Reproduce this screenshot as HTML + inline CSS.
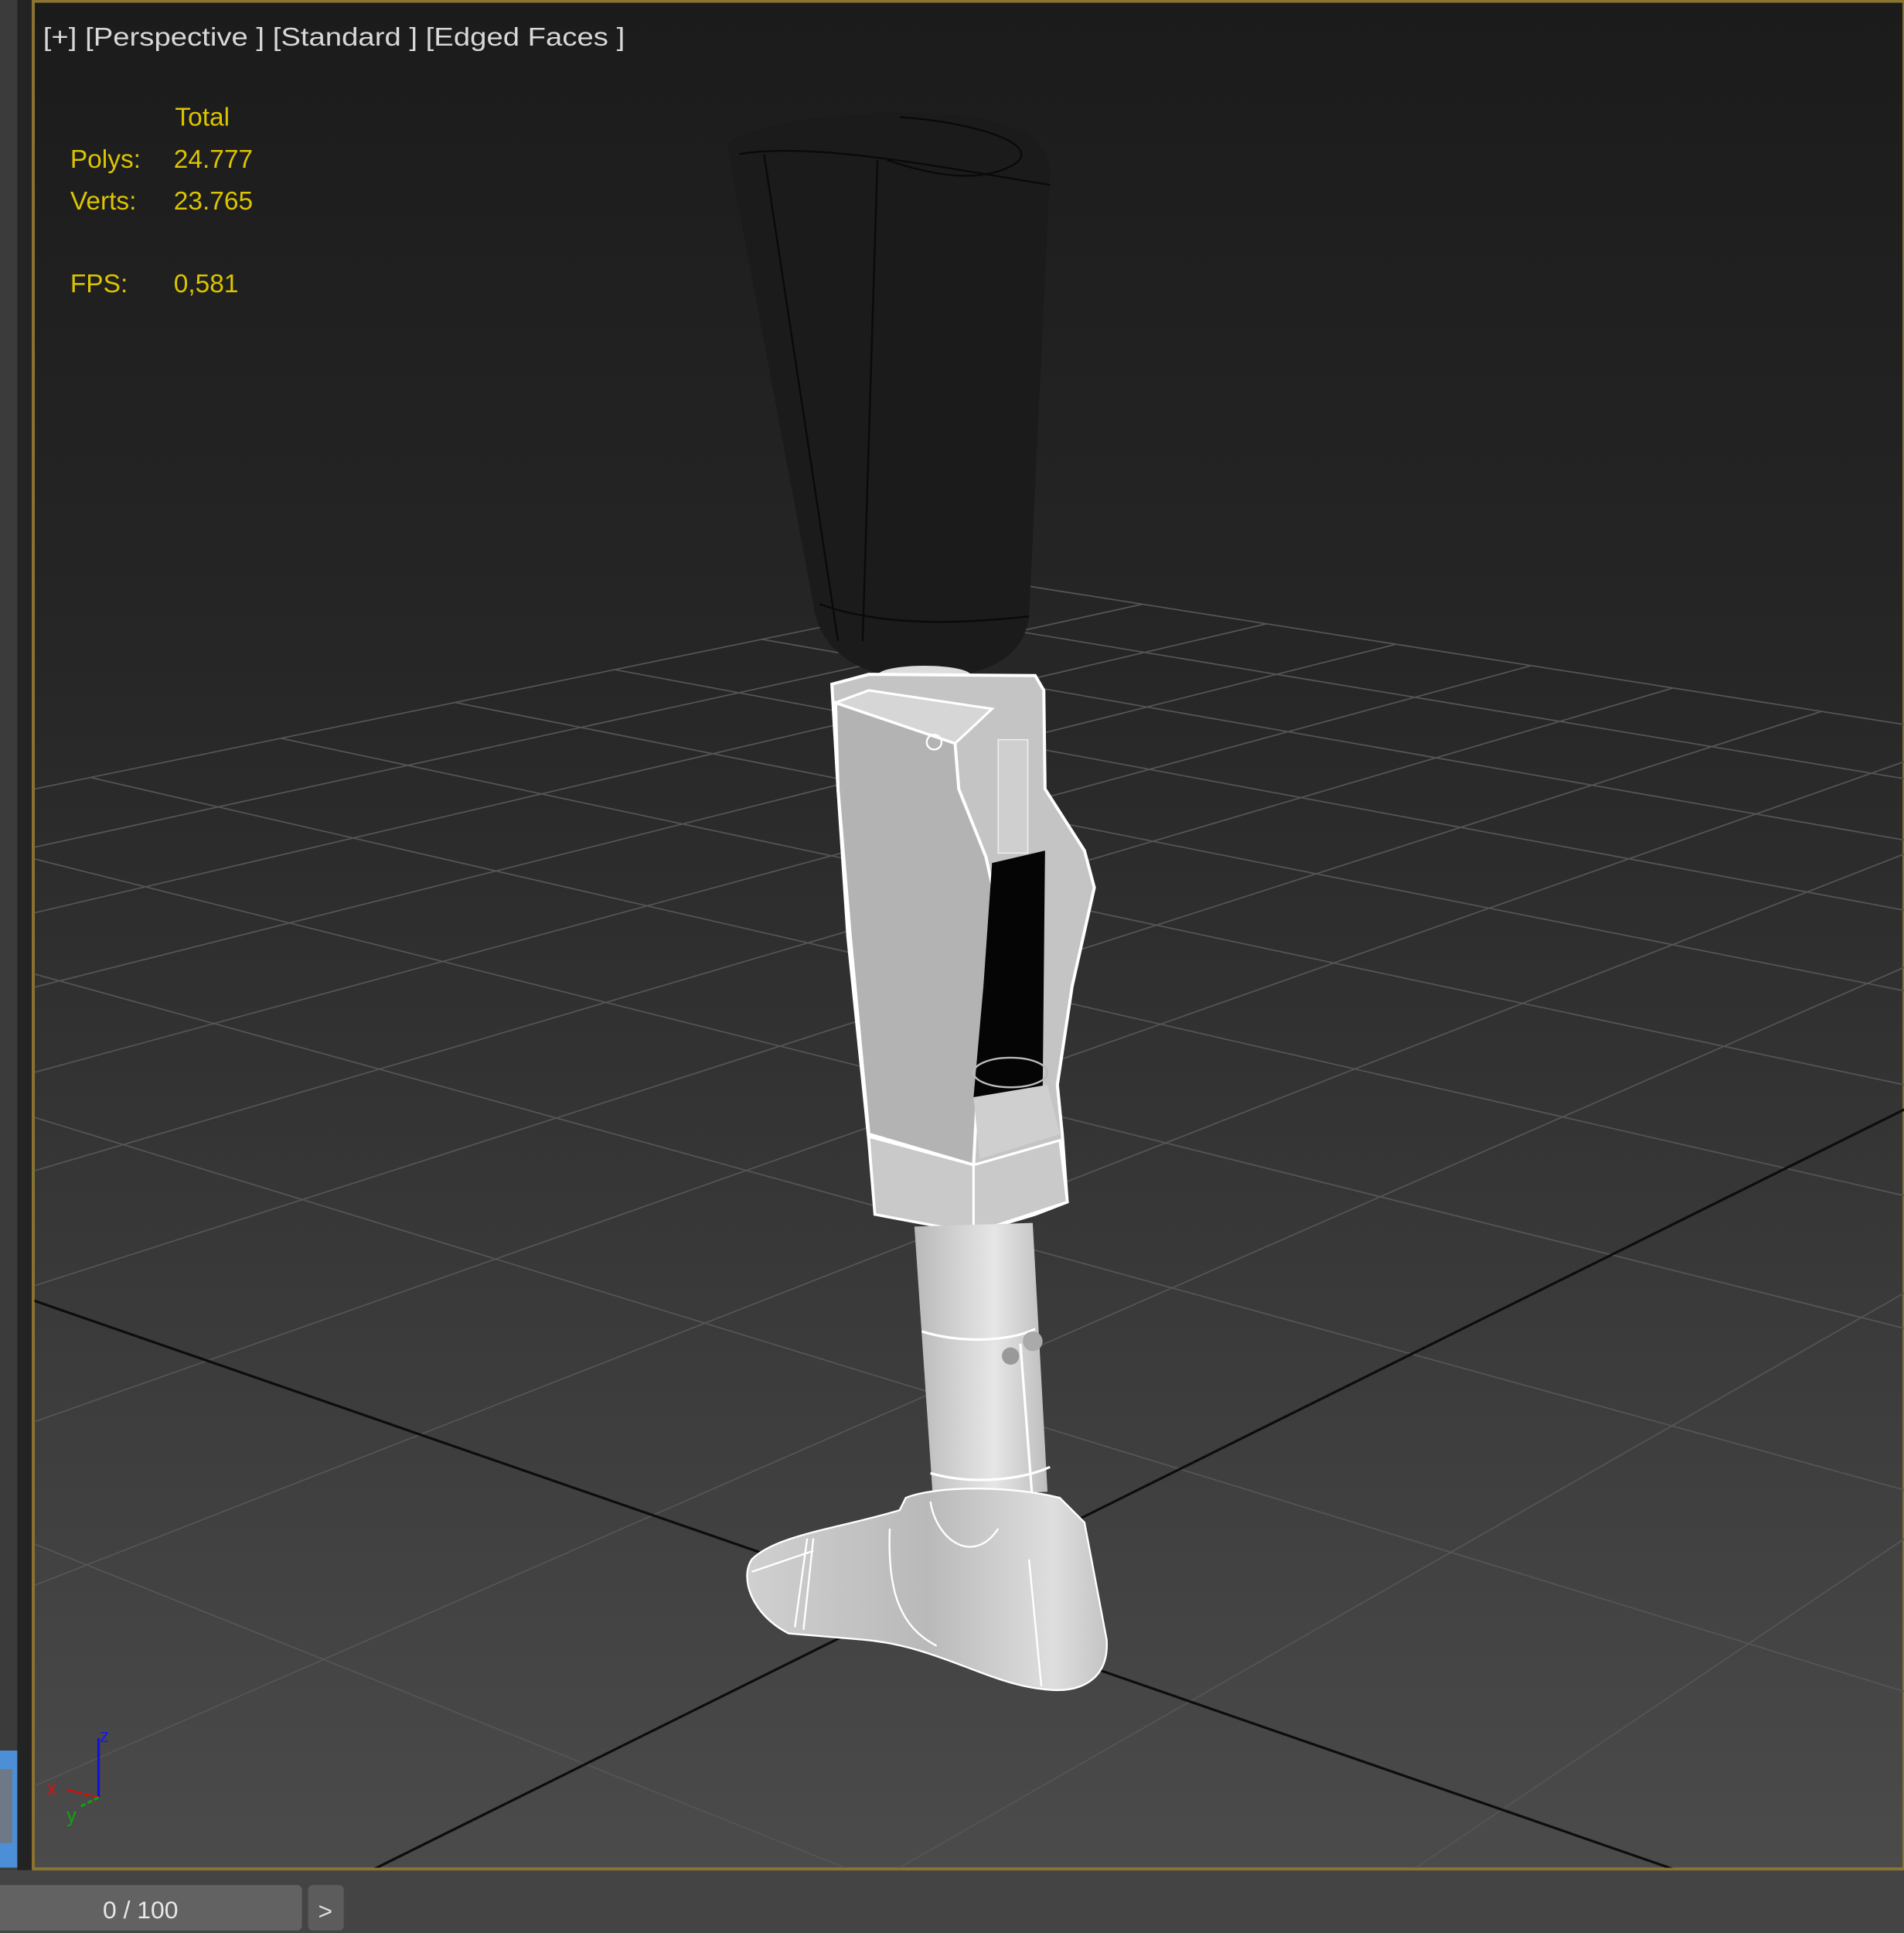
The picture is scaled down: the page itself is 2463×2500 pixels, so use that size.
<!DOCTYPE html>
<html><head><meta charset="utf-8"><style>
html,body{margin:0;padding:0;background:#444;overflow:hidden;width:2463px;height:2500px}
svg{display:block}
</style></head><body>
<svg id="s" width="2463" height="2500" viewBox="0 0 1545 1568" preserveAspectRatio="none" xmlns="http://www.w3.org/2000/svg">
<defs>
<linearGradient id="bg" x1="0" y1="0" x2="0" y2="1">
<stop offset="0" stop-color="#1b1b1b"/><stop offset="0.35" stop-color="#262626"/><stop offset="1" stop-color="#4b4b4b"/>
</linearGradient>
<linearGradient id="tube" x1="0" y1="0" x2="1" y2="0">
<stop offset="0" stop-color="#b8b8b8"/><stop offset="0.3" stop-color="#d0d0d0"/><stop offset="0.6" stop-color="#e6e6e6"/><stop offset="1" stop-color="#bdbdbd"/>
</linearGradient>
<linearGradient id="foot" x1="0" y1="0" x2="1" y2="0">
<stop offset="0" stop-color="#d0d0d0"/><stop offset="0.5" stop-color="#b9b9b9"/><stop offset="0.85" stop-color="#dedede"/><stop offset="1" stop-color="#c4c4c4"/>
</linearGradient>
<clipPath id="vp"><rect x="28" y="2" width="1517" height="1513"/></clipPath>
</defs>
<rect width="1545" height="1568" fill="#444"/>
<rect x="0" y="0" width="14" height="1517" fill="#3b3b3b"/>
<rect x="14" y="0" width="12" height="1517" fill="#232323"/>
<rect x="0" y="1420" width="14" height="95" fill="#4d8fd6"/>
<rect x="0" y="1435" width="10" height="60" fill="#6e7886"/>
<rect x="27" y="1" width="1518" height="1515" fill="url(#bg)" stroke="#8a7432" stroke-width="2.5"/>
<g id="grid" clip-path="url(#vp)"></g>

<!-- socket -->
<path d="M590,118 C600,100 700,88 760,92 C820,96 852,110 852,140 L835,500 C830,540 790,550 745,550 C700,550 665,530 660,490 Z" fill="#1b1b1b"/>
<path d="M600,125 C660,115 760,135 852,150 M712,130 L700,520 M620,125 L680,520 M665,490 C720,510 790,505 835,500 M730,95 C800,100 850,120 820,135 C790,150 750,140 720,130" fill="none" stroke="#0a0a0a" stroke-width="1.5"/>
<ellipse cx="750" cy="548" rx="38" ry="8" fill="#ddd"/>

<!-- knee frame -->
<path d="M675,555 L705,547 L840,548 L847,560 L848,640 L880,690 L888,720 L870,800 L858,880 L862,920 L866,975 L840,985 L790,1000 L710,985 L705,925 L688,760 L680,640 Z" fill="#c4c4c4" stroke="#fff" stroke-width="2.5"/>
<path d="M678,570 L775,603 L778,640 L800,695 L810,740 L795,850 L790,945 L705,920 L690,760 L680,640 Z" fill="#b3b3b3" stroke="#fff" stroke-width="2.5"/>
<path d="M678,570 L705,560 L805,575 L775,603 Z" fill="#d6d6d6" stroke="#fff" stroke-width="2"/>
<path d="M805,700 L848,690 L846,890 L790,890 L798,800 Z" fill="#050505"/>
<rect x="810" y="600" width="24" height="92" fill="#cfcfcf" stroke="#eee" stroke-width="1"/>
<ellipse cx="820" cy="870" rx="30" ry="12" fill="none" stroke="#bbb" stroke-width="1.5"/>
<path d="M790,890 L850,880 L860,920 L795,940 Z" fill="#cfcfcf"/>
<path d="M705,922 L790,945 L860,925 L866,975 L790,1000 L710,985 Z" fill="#c9c9c9" stroke="#fff" stroke-width="2"/>
<line x1="790" y1="945" x2="790" y2="1000" stroke="#fff" stroke-width="2"/>
<circle cx="758" cy="602" r="6" fill="none" stroke="#fff" stroke-width="1.5"/>

<!-- tube -->
<path d="M742,995 L838,992 L850,1210 L757,1215 Z" fill="url(#tube)"/>
<path d="M748,1080 C780,1090 820,1088 840,1078 M755,1195 C790,1205 830,1200 852,1190 M828,1090 L838,1220" fill="none" stroke="#fff" stroke-width="2"/>
<circle cx="838" cy="1088" r="8" fill="#aaa"/><circle cx="820" cy="1100" r="7" fill="#999"/>

<!-- foot -->
<path d="M735,1215 C760,1205 820,1205 860,1215 L880,1235 L898,1330 C900,1360 880,1375 845,1370 C800,1365 760,1335 700,1330 L640,1325 C610,1310 600,1280 610,1265 C630,1245 680,1240 730,1225 Z" fill="url(#foot)" stroke="#fff" stroke-width="1.5"/>
<path d="M655,1248 L645,1320 M660,1248 L652,1322 M722,1240 C720,1290 730,1320 760,1335 M835,1265 L845,1368 M610,1275 L660,1258 M755,1218 C760,1250 790,1270 810,1240" fill="none" stroke="#fff" stroke-width="1.5"/>

<!-- axis tripod -->
<line x1="80" y1="1410" x2="80" y2="1458" stroke="#1010e0" stroke-width="2"/>
<text x="81" y="1413" font-family="Liberation Sans, sans-serif" font-size="15" fill="#1818e8">z</text>
<line x1="80" y1="1458" x2="55" y2="1452" stroke="#d01010" stroke-width="2" stroke-dasharray="5,2"/>
<text x="38" y="1456" font-family="Liberation Sans, sans-serif" font-size="16" fill="#c81818">x</text>
<line x1="80" y1="1458" x2="64" y2="1466" stroke="#10a010" stroke-width="2" stroke-dasharray="4,2"/>
<text x="54" y="1478" font-family="Liberation Sans, sans-serif" font-size="16" fill="#14a014">y</text>

<!-- texts -->
<g font-family="Liberation Sans, sans-serif" font-size="21">
<text x="35" y="37" fill="#d8d8d8" textLength="472" lengthAdjust="spacingAndGlyphs">[+] [Perspective ] [Standard ] [Edged Faces ]</text>
<g fill="#dcc400">
<text x="142" y="102">Total</text>
<text x="57" y="136">Polys:</text><text x="141" y="136">24.777</text>
<text x="57" y="170">Verts:</text><text x="141" y="170">23.765</text>
<text x="57" y="237">FPS:</text><text x="141" y="237">0,581</text>
</g>
</g>

<!-- timeline -->
<rect x="-5" y="1529" width="250" height="37" rx="4" fill="#626262"/>
<rect x="250" y="1529" width="29" height="37" rx="4" fill="#5c5c5c"/>
<text x="114" y="1556" text-anchor="middle" font-family="Liberation Sans, sans-serif" font-size="20" fill="#e8e8e8">0 / 100</text>
<text x="264" y="1557" text-anchor="middle" font-family="Liberation Sans, sans-serif" font-size="20" fill="#ddd">&gt;</text>
</svg>
<script>
(function(){
var O=[737,1301],A=[-3717,-243],B=[3514,-77],N=10,a=0.0488,b=0.0862;
function P(u,v){var d=1+a*u+b*v;return[(O[0]+a*u*A[0]+b*v*B[0])/d,(O[1]+a*u*A[1]+b*v*B[1])/d];}
var g=document.getElementById('grid'),grey='',blk='';
function L(p,q,col,w){return '<line x1="'+p[0].toFixed(1)+'" y1="'+p[1].toFixed(1)+'" x2="'+q[0].toFixed(1)+'" y2="'+q[1].toFixed(1)+'" stroke="'+col+'" stroke-width="'+w+'"/>';}
function clampV(u,lo){var m=(-0.9-a*u)/b;return Math.max(lo,m);}
function clampU(v,lo){var m=(-0.9-b*v)/a;return Math.max(lo,m);}
for(var i=-N;i<=N;i++){
 var s1=L(P(i,clampV(i,-N)),P(i,N),i==0?'#0d0d0d':'#555',i==0?2:1.1);
 var s2=L(P(clampU(i,-N),i),P(N,i),i==0?'#0d0d0d':'#555',i==0?2:1.1);
 if(i==0){blk+=s1+s2;}else{grey+=s1+s2;}
}
g.innerHTML=grey+blk;
})();
</script>
</body></html>
